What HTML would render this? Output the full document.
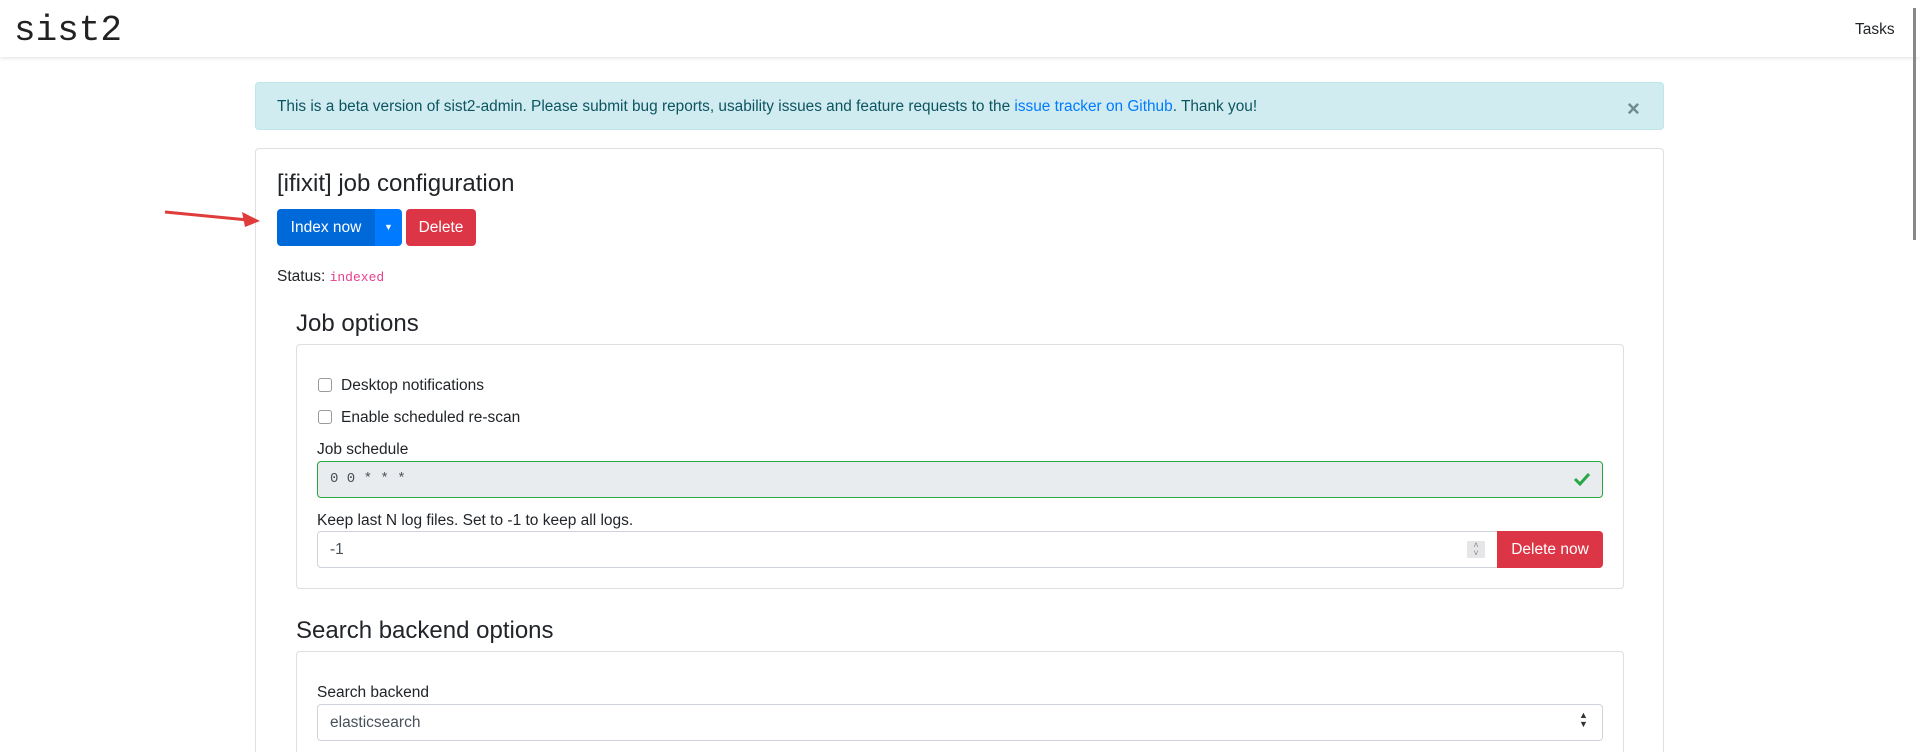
<!DOCTYPE html>
<html style="height:752px;overflow:hidden"><head><meta charset="utf-8"><style>
*{box-sizing:border-box;margin:0;padding:0}
body{width:1920px;height:752px;overflow:hidden;background:#fff;font-family:"Liberation Sans",sans-serif;color:#212529;font-size:15.5px;position:relative}
.a{position:absolute}
.nav{left:0;top:0;width:1920px;height:57px;background:#fff;box-shadow:0 1px 4px rgba(0,0,0,.12)}
.logo{left:14px;top:10px;font-family:"Liberation Mono",monospace;font-size:36px;color:#222}
.tasks{left:1855px;top:21px;font-size:15.5px}
.sb{left:1913px;top:8px;width:3px;height:232px;background:#888}
.alert{left:255px;top:82px;width:1409px;height:48px;background:#d1ecf1;border:1px solid #bee5eb;border-radius:4px;color:#0c5460;padding:15px 0 0 21px;font-size:15.4px}
.alert a{color:#007bff;text-decoration:none}
.x{left:1627px;top:96px;font-size:22px;color:#6e8b91;font-weight:bold}
.card{left:255px;top:148px;width:1409px;height:604px;border:1px solid #dfdfdf;border-bottom:none;border-radius:4px 4px 0 0}
.h{font-size:24px;color:#212529}
.btn{height:37px;color:#fff;font-size:15.5px;line-height:37px;text-align:center;border-radius:4px}
.in{border:1px solid #ced4da;border-radius:4px;height:37px;padding:0 12px;line-height:35px;color:#495057}
.ic{left:296px;width:1328px;border:1px solid #dfdfdf;border-radius:4px}
.cb{width:14px;height:14px;border:1px solid #999;border-radius:3px;background:#fff}
</style></head><body>
<div class="a nav"></div>
<div class="a logo">sist2</div>
<div class="a tasks">Tasks</div>
<div class="a sb"></div>
<div class="a alert">This is a beta version of sist2-admin. Please submit bug reports, usability issues and feature requests to the <a>issue tracker on Github</a>. Thank you!</div>
<div class="a x">×</div>
<div class="a card"></div>
<div class="a h" style="left:277px;top:170px">[ifixit] job configuration</div>
<svg class="a" style="left:160px;top:205px" width="104" height="24"><line x1="5" y1="7" x2="88" y2="15" stroke="#e03c3c" stroke-width="3"/><polygon points="100,16 82,7 85,22" fill="#e03c3c"/></svg>
<div class="a btn" style="left:277px;top:209px;width:98px;background:#0069d9;border-radius:4px 0 0 4px">Index now</div>
<div class="a btn" style="left:375px;top:209px;width:27px;background:#007bff;border-radius:0 4px 4px 0;font-size:9px">▼</div>
<div class="a btn" style="left:406px;top:209px;width:70px;background:#dc3545">Delete</div>
<div class="a" style="left:277px;top:268px">Status: <span style="font-family:'Liberation Mono',monospace;color:#e83e8c;font-size:13px">indexed</span></div>
<div class="a h" style="left:296px;top:310px">Job options</div>
<div class="a ic" style="top:344px;height:245px"></div>
<div class="a cb" style="left:318px;top:378px"></div>
<div class="a" style="left:341px;top:377px">Desktop notifications</div>
<div class="a cb" style="left:318px;top:410px"></div>
<div class="a" style="left:341px;top:409px">Enable scheduled re-scan</div>
<div class="a" style="left:317px;top:441px">Job schedule</div>
<div class="a in" style="left:317px;top:461px;width:1286px;background:#e9ecef;border-color:#28a745;font-family:'Liberation Mono',monospace;font-size:14px">0 0 * * *</div>
<svg class="a" style="left:1573px;top:472px" width="18" height="14"><path d="M2 7 L7 12 L16 2" stroke="#28a745" stroke-width="3" fill="none"/></svg>
<div class="a" style="left:317px;top:512px">Keep last N log files. Set to -1 to keep all logs.</div>
<div class="a in" style="left:317px;top:531px;width:1190px;border-radius:4px 0 0 4px">-1</div>
<div class="a" style="left:1467px;top:541px;width:18px;height:17px;background:#e6e6e9;color:#888;font-size:9px;line-height:8px;text-align:center">˄<br>˅</div>
<div class="a btn" style="left:1497px;top:531px;width:106px;background:#dc3545;border-radius:0 4px 4px 0">Delete now</div>
<div class="a h" style="left:296px;top:617px">Search backend options</div>
<div class="a ic" style="top:651px;height:101px;border-bottom:none;border-radius:4px 4px 0 0"></div>
<div class="a" style="left:317px;top:684px">Search backend</div>
<div class="a in" style="left:317px;top:704px;width:1286px">elasticsearch</div>
<div class="a" style="left:1579px;top:711px;font-size:9px;line-height:9px;color:#333">▲<br>▼</div>
</body></html>
